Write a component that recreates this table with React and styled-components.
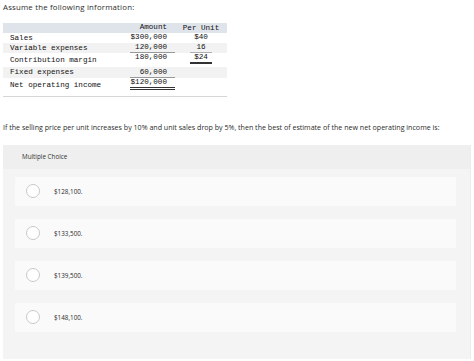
import React from "react";
import styled, { createGlobalStyle } from "styled-components";

const GlobalStyle = createGlobalStyle`
  body {
    margin: 0;
    background: #fff;
    font-family: "Open Sans", Lato, Arial, sans-serif;
    color: #2b2b2b;
  }
`;

const Page = styled.div`
  width: 474px;
  height: 361px;
  padding: 0 3px;
  box-sizing: border-box;
  overflow: hidden;
`;

const Intro = styled.p`
  margin: 2px 0 0;
  font-size: 7.8px;
  letter-spacing: 0.2px;
  line-height: 10px;
`;

const Table = styled.table`
  margin-top: 11px;
  width: 224px;
  border-collapse: collapse;
  font-family: "Liberation Mono", "Courier New", monospace;
  font-size: 7.6px;
  color: #111;
  border-bottom: 1px solid #d6d6d6;
`;

const HeadRow = styled.tr`
  background: #dfe3ea;
  height: 10px;
`;

const Row = styled.tr`
  background: ${(p) => (p.$shade ? "#f2f2f2" : "#fff")};
  height: ${(p) => p.$h}px;
`;

const Label = styled.td`
  padding: 0 0 0 7px;
  width: 110px;
  line-height: 9px;
`;

const Num = styled.td`
  padding: 0;
  width: 55px;
  line-height: 9px;
  vertical-align: ${(p) => (p.$top ? "top" : "middle")};
`;

const Unit = styled.td`
  padding: 0;
  line-height: 9px;
  text-align: center;
  vertical-align: ${(p) => (p.$top ? "top" : "middle")};
`;

const AmountCell = styled.div`
  width: 45px;
  margin-left: auto;
  padding-right: 8px;
  box-sizing: border-box;
  text-align: right;
  border-bottom: ${(p) =>
    p.$line === "double"
      ? "3px double #333"
      : p.$line === "thin"
      ? "1px solid #999"
      : "1px solid transparent"};
`;

const UnitCell = styled.div`
  width: 22px;
  margin: 0 auto;
  text-align: center;
  border-bottom: ${(p) =>
    p.$line === "thick"
      ? "2px solid #333"
      : p.$line === "thin"
      ? "1px solid #b0b0b0"
      : "1px solid transparent"};
`;

const Question = styled.p`
  margin: 25px 0 0;
  font-size: 7.1px;
  line-height: 10px;
  white-space: nowrap;
`;

const Panel = styled.section`
  margin-top: 13px;
  width: 468px;
  height: 214px;
  background: #f4f4f4;
  border-right: 1px solid #ececec;
  box-sizing: border-box;
`;

const PanelHead = styled.div`
  height: 24px;
  background: #efefef;
  padding-left: 19px;
  display: flex;
  align-items: center;
  font-size: 6.3px;
  color: #333;
`;

const Options = styled.div`
  display: flex;
  flex-direction: column;
  gap: 13px;
  padding: 8px 14px 0 12px;
`;

const Option = styled.label`
  height: 29px;
  background: #fafafa;
  display: flex;
  align-items: center;
  padding-left: 11px;
  gap: 14px;
  font-size: 6.3px;
  color: #2b2b2b;
`;

const Radio = styled.span`
  width: 12px;
  height: 12px;
  border-radius: 50%;
  border: 1px solid #c9c9c9;
  background: #fff;
  flex-shrink: 0;
`;

const rows = [
  { label: "Sales", amount: "$300,000", unit: "$40", h: 10 },
  { label: "Variable expenses", amount: "120,000", unit: "16", aLine: "thin", uLine: "thin", shade: true, h: 10 },
  { label: "Contribution margin", amount: "180,000", unit: "$24", uLine: "thick", h: 14, top: true },
  { label: "Fixed expenses", amount: "60,000", aLine: "thin", shade: true, h: 11 },
  { label: "Net operating income", amount: "$120,000", aLine: "double", h: 14, top: true },
];

const choices = ["$128,100.", "$133,500.", "$139,500.", "$148,100."];

export default function App() {
  return (
    <Page>
      <GlobalStyle />
      <Intro>Assume the following information:</Intro>
      <Table>
        <tbody>
          <HeadRow>
            <Label />
            <Num>
              <AmountCell>Amount</AmountCell>
            </Num>
            <Unit>Per Unit</Unit>
          </HeadRow>
          {rows.map((r) => (
            <Row key={r.label} $shade={r.shade} $h={r.h}>
              <Label>{r.label}</Label>
              <Num $top={r.top}>
                <AmountCell $line={r.aLine}>{r.amount}</AmountCell>
              </Num>
              <Unit $top={r.top}>
                {r.unit && <UnitCell $line={r.uLine}>{r.unit}</UnitCell>}
              </Unit>
            </Row>
          ))}
          <tr style={{ height: 4 }}>
            <td colSpan={3} />
          </tr>
        </tbody>
      </Table>
      <Question>
        If the selling price per unit increases by 10% and unit sales drop by 5%, then the best of
        estimate of the new net operating income is:
      </Question>
      <Panel>
        <PanelHead>Multiple Choice</PanelHead>
        <Options>
          {choices.map((c) => (
            <Option key={c}>
              <Radio />
              {c}
            </Option>
          ))}
        </Options>
      </Panel>
    </Page>
  );
}
